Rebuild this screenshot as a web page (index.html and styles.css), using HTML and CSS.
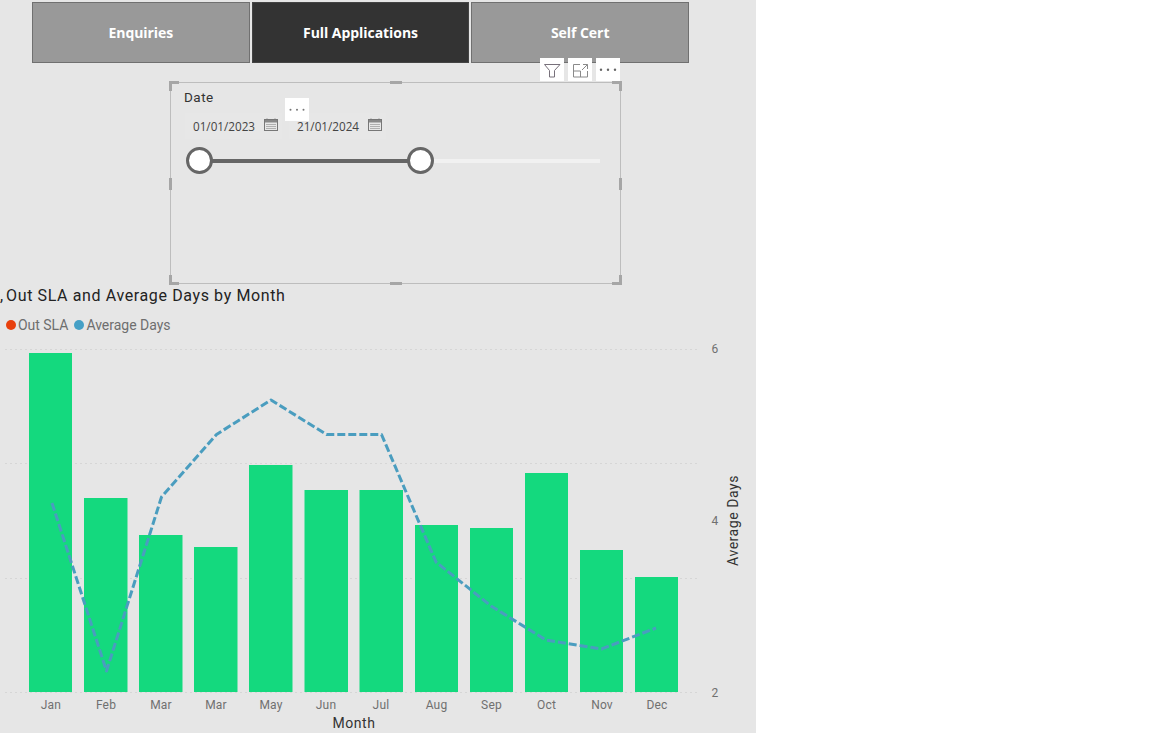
FILE: index.html
```html
<!DOCTYPE html>
<html lang="en">
<head>
<meta charset="utf-8">
<title>Full Applications</title>
<link rel="stylesheet" href="styles.css">
</head>
<body>
<main class="canvas">
  <nav class="tabs">
    <button class="tab">Enquiries</button>
    <button class="tab active">Full Applications</button>
    <button class="tab">Self Cert</button>
  </nav>

  <section class="slicer">
    <i class="corner tl"></i><i class="corner tr"></i><i class="corner bl"></i><i class="corner br"></i>
    <i class="grip gt"></i><i class="grip gb"></i><i class="grip gl"></i><i class="grip gr"></i>
    <div class="toolbar">
      <span class="tool"><svg width="24" height="23" viewBox="0 0 24 23"><path d="M4.500 6.500H20L14.500 12.500V19H9.500V12.500Z" fill="none" stroke="#77707a" stroke-width="1"/></svg></span>
      <span class="tool"><svg width="24" height="23" viewBox="0 0 24 23"><path d="M12 6.500H5.500V19H19.500V13M5.500 13H12.500V19M15 6.500H19.500V11M19.500 6.500 14 12" fill="none" stroke="#8a8a8a" stroke-width="1"/></svg></span>
      <span class="tool"><svg width="24" height="23" viewBox="0 0 24 23"><g fill="#666"><circle cx="5" cy="11.700" r="1.200"/><circle cx="12" cy="11.700" r="1.200"/><circle cx="19" cy="11.700" r="1.200"/></g></svg></span>
    </div>
    <span class="tool mini"><svg width="24" height="23" viewBox="0 0 24 23"><g fill="#777"><circle cx="5.500" cy="11.700" r="1"/><circle cx="12" cy="11.700" r="1"/><circle cx="18.500" cy="11.700" r="1"/></g></svg></span>
    <h2 class="slicer-title">Date</h2>
    <div class="dates">
      <div class="date"><span>01/01/2023</span>
        <svg class="cal" width="14" height="13" viewBox="0 0 14 13"><path d="M3 .5v2M11 .5v2" stroke="#777"/><rect x=".5" y="1.500" width="13" height="11" fill="none" stroke="#777"/><rect x="1" y="2" width="12" height="2.500" fill="#888"/><path d="M2.500 6.500h9M2.500 8.500h9M2.500 10.500h9" stroke="#777" stroke-dasharray="1 1"/></svg></div>
      <div class="date"><span>21/01/2024</span>
        <svg class="cal" width="14" height="13" viewBox="0 0 14 13"><path d="M3 .5v2M11 .5v2" stroke="#777"/><rect x=".5" y="1.500" width="13" height="11" fill="none" stroke="#777"/><rect x="1" y="2" width="12" height="2.500" fill="#888"/><path d="M2.500 6.500h9M2.500 8.500h9M2.500 10.500h9" stroke="#777" stroke-dasharray="1 1"/></svg></div>
    </div>
    <div class="slider">
      <div class="fill"></div>
      <span class="thumb"></span>
      <span class="thumb"></span>
    </div>
  </section>

  <section class="chart">
    <h2 class="chart-title"><span class="frag">, </span>Out SLA and Average Days by Month</h2>
    <ul class="legend">
      <li><i class="dot red"></i>Out SLA</li>
      <li><i class="dot blue"></i>Average Days</li>
    </ul>
    <svg class="plot" width="756" height="395" viewBox="0 338 756 395">
      <g class="grid">
        <path d="M5 349.500H700"/><path d="M5 463.500H700"/><path d="M5 578.500H700"/><path d="M5 692.500H700"/>
      </g>
      <g class="bars">
        <rect x="29" y="353" width="43" height="339"/>
        <rect x="84" y="498" width="43.500" height="194"/>
        <rect x="139" y="535" width="43.500" height="157"/>
        <rect x="194" y="547" width="43.500" height="145"/>
        <rect x="249" y="465" width="43.500" height="227"/>
        <rect x="304.500" y="490" width="43.500" height="202"/>
        <rect x="359.500" y="490" width="43.500" height="202"/>
        <rect x="415" y="525" width="43" height="167"/>
        <rect x="470" y="528" width="43" height="164"/>
        <rect x="525" y="473" width="43" height="219"/>
        <rect x="580" y="550" width="43" height="142"/>
        <rect x="635" y="577" width="43" height="115"/>
      </g>
      <polyline class="line" points="52,503 106.500,671 161.500,497 216.500,434.500 271,400 326.500,434.500 381.500,434.500 436,562 491,606 546,640 601.500,649 656,628"/>
      <g class="ticks" text-anchor="middle">
        <text x="51" y="709">Jan</text><text x="106" y="709">Feb</text><text x="161" y="709">Mar</text><text x="216" y="709">Mar</text><text x="271" y="709">May</text><text x="326" y="709">Jun</text><text x="381" y="709">Jul</text><text x="436.500" y="709">Aug</text><text x="491.500" y="709">Sep</text><text x="546.500" y="709">Oct</text><text x="602" y="709">Nov</text><text x="657" y="709">Dec</text>
        <text x="715" y="353">6</text><text x="715" y="525">4</text><text x="715" y="697">2</text>
      </g>
      <text class="axis" x="354" y="728" text-anchor="middle">Month</text>
      <text class="axis" transform="translate(738 520.500) rotate(-90)" text-anchor="middle">Average Days</text>
    </svg>
  </section>
</main>
</body>
</html>
```
FILE: styles.css
```css
* { box-sizing: border-box; }
html, body { margin: 0; padding: 0; height: 733px; overflow: hidden; background: #fff; }
body { font-family: Roboto, "Liberation Sans", sans-serif; }

.canvas {
  position: relative;
  width: 756px;
  height: 733px;
  background: #e6e6e6;
  display: flex;
  flex-direction: column;
  overflow: hidden;
}

.tabs {
  display: flex;
  gap: 2px;
  margin: 2px 0 0 32px;
  width: 657px;
  height: 62px;
}
.tab {
  flex: 1;
  border: 1px solid #707070;
  background: #999;
  color: #fff;
  font: 700 14px "Open Sans", sans-serif;
  letter-spacing: -.05px;
  padding: 0;
}
.tab.active { background: #333; border-color: #444; }

.slicer {
  position: relative;
  margin: 19px 0 0 170px;
  width: 451px;
  height: 202px;
  border: 1px solid #bdbdbd;
  padding: 6px 0 0 13px;
  flex: none;
}
.slicer-title {
  margin: 0;
  font: 400 13.500px/16px Roboto, sans-serif;
  letter-spacing: .5px;
  color: #333;
}
.dates { display: flex; gap: 7px; margin-top: 8px; margin-left: 1px; }
.date {
  display: flex;
  align-items: center;
  width: 97px;
  height: 26px;
  padding-left: 8px;
  gap: 9px;
  background: #e7e7e7;
  font: 400 11.700px "Open Sans", sans-serif;
  color: #444;
}
.cal { margin-top: -3px; flex: none; }

.slider {
  position: relative;
  margin: 8px 0 0 1.500px;
  width: 414.500px;
  height: 27px;
  display: flex;
  align-items: center;
  justify-content: space-between;
  background: linear-gradient(#f1f1f1, #f1f1f1) center / 100% 4px no-repeat;
}
.fill {
  position: absolute;
  left: 12px;
  top: 11.500px;
  width: 212px;
  height: 4px;
  background: #666;
}
.thumb {
  position: relative;
  width: 27px;
  height: 27px;
  border: 3px solid #666;
  border-radius: 50%;
  background: #fff;
}
.thumb + .thumb { margin-right: 166.500px; }

.corner { position: absolute; width: 10px; height: 10px; border: 0 solid #a6a6a6; }
.tl { left: -2px; top: -2px; border-width: 3px 0 0 3px; }
.tr { right: -2px; top: -2px; border-width: 3px 3px 0 0; }
.bl { left: -2px; bottom: -2px; border-width: 0 0 3px 3px; }
.br { right: -2px; bottom: -2px; border-width: 0 3px 3px 0; }
.grip { position: absolute; background: #a6a6a6; }
.gt, .gb { width: 12px; height: 3px; left: 219px; }
.gt { top: -2px; }
.gb { bottom: -2px; }
.gl, .gr { width: 3px; height: 12px; top: 95px; }
.gl { left: -2px; }
.gr { right: -2px; }

.toolbar {
  position: absolute;
  right: 0;
  top: -25px;
  display: flex;
  gap: 4px;
}
.tool {
  width: 24px;
  height: 23px;
  background: #fff;
  display: flex;
  align-items: center;
  justify-content: center;
}
.mini {
  position: absolute;
  left: 114px;
  top: 15px;
}

.chart { flex: 1; display: flex; flex-direction: column; }
.chart-title {
  margin: 2px 0 0 0;
  font: 400 16px/20px Roboto, sans-serif;
  letter-spacing: .62px;
  color: #222;
}
.frag { word-spacing: -2.300px; }
.legend {
  list-style: none;
  display: flex;
  gap: 6px;
  margin: 9px 0 0 6px;
  padding: 0;
  font: 400 14px/20px Roboto, sans-serif;
  letter-spacing: -.02px;
  color: #6e6e6e;
}
.legend li { display: flex; align-items: center; gap: 2px; }
.dot { width: 10px; height: 10px; border-radius: 50%; }
.red { background: #e8400c; }
.blue { background: #45a0c6; }

.plot { display: block; flex: none; margin-top: 3px; }
.grid path { stroke: #d6d6d6; stroke-width: 1; stroke-dasharray: 2 3; fill: none; }
.bars rect { fill: #14d97e; }
.line { fill: none; stroke: #4a9dbf; stroke-width: 3; stroke-dasharray: 8 3; stroke-linejoin: round; }
.ticks text { font: 400 12px Roboto, sans-serif; letter-spacing: .2px; fill: #707070; }
.axis { font: 400 14px Roboto, sans-serif; letter-spacing: .55px; fill: #333; }
```
